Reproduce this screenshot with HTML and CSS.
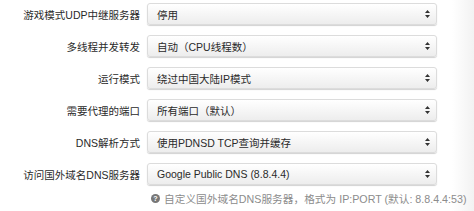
FILE: index.html
```html
<!DOCTYPE html>
<html lang="zh-CN">
<head>
  <meta charset="UTF-8" />
  <meta name="viewport" content="width=device-width, initial-scale=1.0"/>
  <title>设置</title>
  <link rel="stylesheet" href="styles.css">
</head>
<body>
  <div class="form">
    <div class="row">
      <label class="label">游戏模式UDP中继服务器</label>
      <div class="select"><span>停用</span><svg class="arrow" width="5" height="8" viewBox="0 0 5 8"><path d="M2.5 0L5 3H0z M2.5 8L5 5H0z" fill="#333"/></svg></div>
    </div>
    <div class="row">
      <label class="label">多线程并发转发</label>
      <div class="select"><span>自动（CPU线程数）</span><svg class="arrow" width="5" height="8" viewBox="0 0 5 8"><path d="M2.5 0L5 3H0z M2.5 8L5 5H0z" fill="#333"/></svg></div>
    </div>
    <div class="row">
      <label class="label">运行模式</label>
      <div class="select"><span>绕过中国大陆IP模式</span><svg class="arrow" width="5" height="8" viewBox="0 0 5 8"><path d="M2.5 0L5 3H0z M2.5 8L5 5H0z" fill="#333"/></svg></div>
    </div>
    <div class="row">
      <label class="label">需要代理的端口</label>
      <div class="select"><span>所有端口（默认）</span><svg class="arrow" width="5" height="8" viewBox="0 0 5 8"><path d="M2.5 0L5 3H0z M2.5 8L5 5H0z" fill="#333"/></svg></div>
    </div>
    <div class="row">
      <label class="label">DNS解析方式</label>
      <div class="select"><span>使用PDNSD TCP查询并缓存</span><svg class="arrow" width="5" height="8" viewBox="0 0 5 8"><path d="M2.5 0L5 3H0z M2.5 8L5 5H0z" fill="#333"/></svg></div>
    </div>
    <div class="row">
      <label class="label">访问国外域名DNS服务器</label>
      <div class="select"><span>Google Public DNS (8.8.4.4)</span><svg class="arrow" width="5" height="8" viewBox="0 0 5 8"><path d="M2.5 0L5 3H0z M2.5 8L5 5H0z" fill="#333"/></svg></div>
    </div>
    <div class="help">
      <svg class="help-icon" width="9" height="9" viewBox="0 0 10 10"><circle cx="5" cy="5" r="5" fill="#777"/><text x="5" y="8.2" text-anchor="middle" font-size="8" font-weight="bold" font-family="Liberation Sans, sans-serif" fill="#fff">?</text></svg>
      <span>自定义国外域名DNS服务器，格式为 IP:PORT (默认: 8.8.4.4:53)</span>
    </div>
  </div>
</body>
</html>
```

FILE: styles.css
```css
body {
  margin: 0;
  height: 211px;
  font-family: "Liberation Sans", "Noto Sans CJK SC", sans-serif;
  font-size: 10.5px;
  color: #333;
  background: linear-gradient(to right, #fff 0, #fff 452px, #f2f2f2 474px);
}
.form {
  padding-top: 3px;
  display: flex;
  flex-direction: column;
  gap: 10px;
}
.row {
  display: flex;
  align-items: center;
  height: 22px;
}
.label {
  width: 140px;
  text-align: right;
  margin-right: 7px;
  color: #2a2a2a;
}
.select {
  width: 290px;
  height: 22px;
  box-sizing: border-box;
  display: flex;
  align-items: center;
  justify-content: space-between;
  padding: 0 6px 0 9px;
  border: 1px solid #dcdcdc;
  border-radius: 3px;
  background: linear-gradient(#ffffff, #ededed);
  box-shadow: 0 1px 1px rgba(0, 0, 0, 0.18);
  color: #2a2a2a;
}
.arrow {
  flex: none;
}
.help {
  display: flex;
  align-items: center;
  margin-top: -4px;
  padding-left: 151px;
  color: #8c8c8c;
  font-size: 10.7px;
}
.help-icon {
  margin-right: 4px;
}
```
